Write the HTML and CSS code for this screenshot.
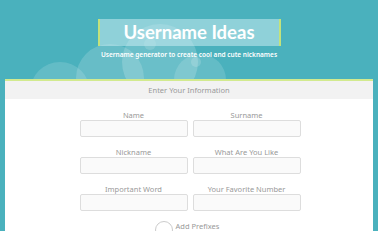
FILE: index.html
```html
<!DOCTYPE html>
<html lang="en">
<head>
    <meta charset="UTF-8">
    <meta name="viewport" content="width=device-width, initial-scale=1.0">
    <title>Username Ideas</title>
    <link rel="stylesheet" href="styles.css">
</head>
<body>
    <svg class="clouds" width="260" height="90" viewBox="0 0 260 90">
        <circle cx="60" cy="92" r="30" fill="rgba(255,255,255,0.14)"/>
        <circle cx="110" cy="78" r="34" fill="rgba(255,255,255,0.16)"/>
        <circle cx="160" cy="62" r="38" fill="rgba(255,255,255,0.18)"/>
        <circle cx="200" cy="80" r="26" fill="rgba(255,255,255,0.14)"/>
        <circle cx="150" cy="44" r="6" fill="rgba(255,255,255,0.14)"/>
        <circle cx="196" cy="62" r="5" fill="rgba(255,255,255,0.16)"/>
    </svg>

    <header class="top">
        <h1 class="title">Username Ideas</h1>
        <p class="subtitle">Username generator to create cool and cute nicknames</p>
    </header>

    <div class="card">
        <div class="card-head">Enter Your Information</div>
        <div class="fields">
            <div class="field">
                <label>Name</label>
                <input type="text">
            </div>
            <div class="field">
                <label>Surname</label>
                <input type="text">
            </div>
            <div class="field">
                <label>Nickname</label>
                <input type="text">
            </div>
            <div class="field">
                <label>What Are You Like</label>
                <input type="text">
            </div>
            <div class="field">
                <label>Important Word</label>
                <input type="text">
            </div>
            <div class="field">
                <label>Your Favorite Number</label>
                <input type="text">
            </div>
        </div>
        <div class="option">
            <span class="check"></span>
            <span class="option-text">Add Prefixes</span>
        </div>
    </div>
</body>
</html>
```

FILE: styles.css
```css
body {
    margin: 0;
    background-color: #4ab1bd;
    font-family: "Noto Sans", "Liberation Sans", sans-serif;
    height: 231px;
    overflow: hidden;
    position: relative;
}

.clouds {
    position: absolute;
    left: 0;
    top: 0;
}

.top {
    position: relative;
    text-align: center;
    padding-top: 19px;
}

.title {
    display: inline-block;
    width: 179px;
    height: 27px;
    margin: 0;
    line-height: 27px;
    background-color: rgba(200, 235, 240, 0.55);
    border-left: 2px solid #c3e27c;
    border-right: 2px solid #c3e27c;
    color: #fff;
    font-family: Lato, sans-serif;
    font-size: 18.5px;
    font-weight: bold;
}

.subtitle {
    margin: 4px 0 0;
    color: #fff;
    font-size: 6.5px;
    font-weight: 600;
    line-height: 10px;
}

.card {
    position: relative;
    margin: 19px 5px 0;
    background-color: #fff;
    border-top: 2px solid #d2ea8f;
    height: 150px;
}

.card-head {
    height: 18px;
    line-height: 18px;
    background-color: #f2f2f2;
    color: #999;
    font-size: 7.5px;
    text-align: center;
}

.fields {
    display: grid;
    grid-template-columns: 108px 108px;
    column-gap: 5px;
    row-gap: 10px;
    justify-content: center;
    padding-top: 11px;
    margin-left: 2px;
}

.field {
    display: flex;
    flex-direction: column;
    align-items: center;
}

.field label {
    color: #999;
    font-size: 7.5px;
    line-height: 10px;
    height: 10px;
}

.field input {
    box-sizing: border-box;
    width: 108px;
    height: 17px;
    margin: 0;
    border: 1px solid #ddd;
    border-radius: 2px;
    background-color: #fafafa;
}

.option {
    display: flex;
    align-items: flex-start;
    justify-content: center;
    gap: 3px;
    margin-top: 10px;
    margin-left: -4px;
    color: #999;
    font-size: 7.5px;
    line-height: 9px;
}

.option-text {
    margin-top: 1px;
}

.check {
    width: 16px;
    height: 16px;
    border: 1px solid #ccc;
    border-radius: 50%;
}
```
